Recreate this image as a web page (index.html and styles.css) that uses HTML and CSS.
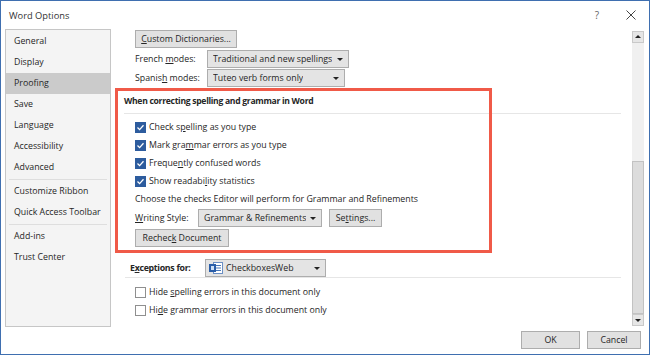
FILE: index.html
```html
<!DOCTYPE html>
<html lang="en">
<head>
    <meta charset="UTF-8">
    <title>Word Options</title>
    <link rel="stylesheet" href="styles.css">
</head>
<body>
    <div class="window">
        <header class="titlebar">
            <span class="title">Word Options</span>
            <span class="help">?</span>
            <svg class="close" width="10" height="10" viewBox="0 0 10 10"><path d="M0.5 0.5 L9.5 9.5 M9.5 0.5 L0.5 9.5" stroke="#444" stroke-width="1" fill="none"/></svg>
        </header>

        <div class="main">
            <nav class="sidebar">
                <div class="nav-item">General</div>
                <div class="nav-item">Display</div>
                <div class="nav-item active">Proofing</div>
                <div class="nav-item">Save</div>
                <div class="nav-item">Language</div>
                <div class="nav-item">Accessibility</div>
                <div class="nav-item">Advanced</div>
                <div class="nav-sep"></div>
                <div class="nav-item">Customize Ribbon</div>
                <div class="nav-item">Quick Access Toolbar</div>
                <div class="nav-sep"></div>
                <div class="nav-item">Add-ins</div>
                <div class="nav-item">Trust Center</div>
            </nav>

            <div class="content">
                <button class="btn dict-btn"><u>C</u>ustom Dictionaries...</button>

                <div class="row">
                    <span class="label mode-label">French <u>m</u>odes:</span>
                    <span class="select french"><span class="val">Traditional and new spellings</span></span>
                </div>
                <div class="row">
                    <span class="label mode-label">Spanis<u>h</u> modes:</span>
                    <span class="select spanish"><span class="val">Tuteo verb forms only</span></span>
                </div>

                <h2 class="section-head">When correcting spelling and grammar in Word</h2>

                <div class="check-row"><span class="box checked"></span><span>Check s<u>p</u>elling as you type</span></div>
                <div class="check-row"><span class="box checked"></span><span>Mark gra<u>m</u>mar errors as you type</span></div>
                <div class="check-row"><span class="box checked"></span><span>Freque<u>n</u>tly confused words</span></div>
                <div class="check-row"><span class="box checked"></span><span>Show readabi<u>l</u>ity statistics</span></div>
                <div class="row text-row">Choose the checks Editor will perform for Grammar and Refinements</div>
                <div class="row">
                    <span class="label style-label"><u>W</u>riting Style:</span>
                    <span class="select writing"><span class="val">Grammar &amp; Refinements</span></span>
                    <button class="btn settings-btn">Se<u>t</u>tings...</button>
                </div>
                <button class="btn recheck-btn">Rechec<u>k</u> Document</button>

                <div class="exceptions">
                    <span class="label exc-label">E<u>x</u>ceptions for:</span>
                    <span class="select doc">
                        <svg class="doc-icon" width="14" height="12" viewBox="0 0 14 12">
                            <rect x="4.5" y="0.5" width="9" height="11" fill="#fff" stroke="#6b8fc4"/>
                            <rect x="7" y="3" width="5" height="1" fill="#4a78b8"/>
                            <rect x="7" y="5.5" width="5" height="1" fill="#4a78b8"/>
                            <rect x="7" y="8" width="5" height="1" fill="#4a78b8"/>
                            <rect x="0" y="2" width="7" height="8" fill="#2b5ea8"/>
                            <rect x="2" y="4" width="3" height="4" fill="#cfe0f5"/>
                        </svg><span class="val">CheckboxesWeb</span></span>
                </div>

                <div class="check-row"><span class="box"></span><span>Hide <u>s</u>pelling errors in this document only</span></div>
                <div class="check-row"><span class="box"></span><span>Hi<u>d</u>e grammar errors in this document only</span></div>

                <div class="callout"></div>
            </div>

            <div class="scrollbar">
                <span class="sb-btn up"></span>
                <span class="sb-track"><span class="sb-thumb"></span></span>
                <span class="sb-btn down"></span>
            </div>
        </div>

        <footer class="footer">
            <button class="btn ok-btn">OK</button>
            <button class="btn cancel-btn">Cancel</button>
        </footer>
    </div>
</body>
</html>
```

FILE: styles.css
```css
* {
    box-sizing: border-box;
}
body {
    margin: 0;
    background: #fff;
    font-family: "Open Sans", "Noto Sans", sans-serif;
    font-size: 8.8px;
    color: #262626;
}
u {
    text-decoration-thickness: 1px;
    text-underline-offset: 1px;
}
.window {
    width: 650px;
    height: 355px;
    border: 1px solid #3f6fb0;
    display: flex;
    flex-direction: column;
    padding: 0 0 0 4px;
}
.titlebar {
    height: 28px;
    display: flex;
    align-items: center;
    padding: 0 13px 0 4px;
    color: #333;
}
.title {
    flex: 1;
    font-size: 9.3px;
}
.help {
    color: #666;
    font-size: 10px;
    margin-right: 27px;
}
.main {
    height: 298px;
    display: flex;
}
.sidebar {
    width: 106px;
    background: #f4f4f4;
    border: 1px solid #c6c6c6;
    padding-top: 1px;
}
.nav-item {
    height: 21px;
    line-height: 21px;
    padding-left: 8px;
}
.nav-item.active {
    background: #cbcbcb;
}
.nav-sep {
    height: 1px;
    margin: 1px 3px;
    background: #dedede;
}
.content {
    position: relative;
    flex: 1;
    margin-left: 4px;
    padding: 1px 0 0 20px;
}
.btn {
    font: inherit;
    color: inherit;
    height: 18px;
    padding: 0;
    background: #e1e1e1;
    border: 1px solid #adadad;
    display: block;
}
.dict-btn {
    width: 102px;
}
.row {
    display: flex;
    align-items: center;
    height: 18px;
    margin-top: 1px;
}
.row:first-of-type {
    margin-top: 2px;
}
.label {
    flex-shrink: 0;
}
.mode-label {
    width: 72px;
}
.style-label {
    width: 63px;
}
.select {
    position: relative;
    display: flex;
    align-items: center;
    height: 18px;
    background: #e4e4e4;
    border: 1px solid #adadad;
    padding: 0 14px 0 5px;
}
.select .val {
    white-space: nowrap;
    overflow: hidden;
}
.select::after {
    content: "";
    position: absolute;
    right: 5px;
    top: 7px;
    border-left: 3px solid transparent;
    border-right: 3px solid transparent;
    border-top: 3px solid #222;
}
.french {
    width: 142px;
}
.spanish {
    width: 138px;
}
.writing {
    width: 124px;
}
.settings-btn {
    width: 53px;
    margin-left: 7px;
}
.section-head {
    margin: 5px 11px 0 -11px;
    font-size: 8.6px;
    font-weight: bold;
    letter-spacing: -0.3px;
    line-height: 18px;
    padding-bottom: 3px;
    border-bottom: 1px solid #e6e6e6;
}
.check-row {
    display: flex;
    align-items: center;
    height: 18px;
}
.section-head + .check-row {
    margin-top: 4px;
}
.box {
    flex-shrink: 0;
    width: 11px;
    height: 11px;
    margin-right: 3px;
    border: 1px solid #8f8f8f;
    background: #fff;
}
.box.checked {
    border-color: #2d5c9e;
    background: #2d5c9e url("data:image/svg+xml;utf8,<svg xmlns='http://www.w3.org/2000/svg' width='9' height='9' viewBox='0 0 9 9'><path d='M1.5 4.5 L3.6 6.6 L7.5 2.3' stroke='white' stroke-width='1.3' fill='none'/></svg>") center no-repeat;
}
.text-row {
    margin-top: 0;
}
.recheck-btn {
    width: 94px;
    margin-top: 2px;
}
.exceptions {
    display: flex;
    align-items: center;
    height: 19px;
    margin: 12px 11px 0 -10px;
    padding-left: 5px;
    border-bottom: 1px solid #e6e6e6;
}
.exc-label {
    width: 75px;
    font-weight: bold;
    letter-spacing: -0.3px;
}
.doc {
    width: 121px;
    height: 18px;
    padding-left: 3px;
}
.doc-icon {
    flex-shrink: 0;
    margin-right: 3px;
}
.exceptions + .check-row {
    margin-top: 5px;
}
.callout {
    position: absolute;
    left: 0;
    top: 59px;
    width: 377px;
    height: 165px;
    border: 3px solid #f05a48;
}
.scrollbar {
    width: 12px;
    margin: 2px 5px 1px 0;
    display: flex;
    flex-direction: column;
    background: #f0f0f0;
}
.sb-btn {
    position: relative;
    height: 12px;
    background: #e6e6e6;
    border: 1px solid #c9c9c9;
}
.sb-btn::after {
    content: "";
    position: absolute;
    left: 2px;
    border-left: 3px solid transparent;
    border-right: 3px solid transparent;
}
.up::after {
    top: 3px;
    border-bottom: 3px solid #222;
}
.down::after {
    top: 4px;
    border-top: 3px solid #222;
}
.sb-track {
    flex: 1;
    display: flex;
    flex-direction: column;
    justify-content: flex-end;
}
.sb-thumb {
    height: 153px;
    background: #dcdcdc;
    border: 1px solid #c2c2c2;
}
.footer {
    flex: 1;
    display: flex;
    justify-content: flex-end;
    align-items: flex-start;
    gap: 7px;
    padding: 4px 8px 0 0;
}
.ok-btn {
    width: 59px;
}
.cancel-btn {
    width: 54px;
}
```
